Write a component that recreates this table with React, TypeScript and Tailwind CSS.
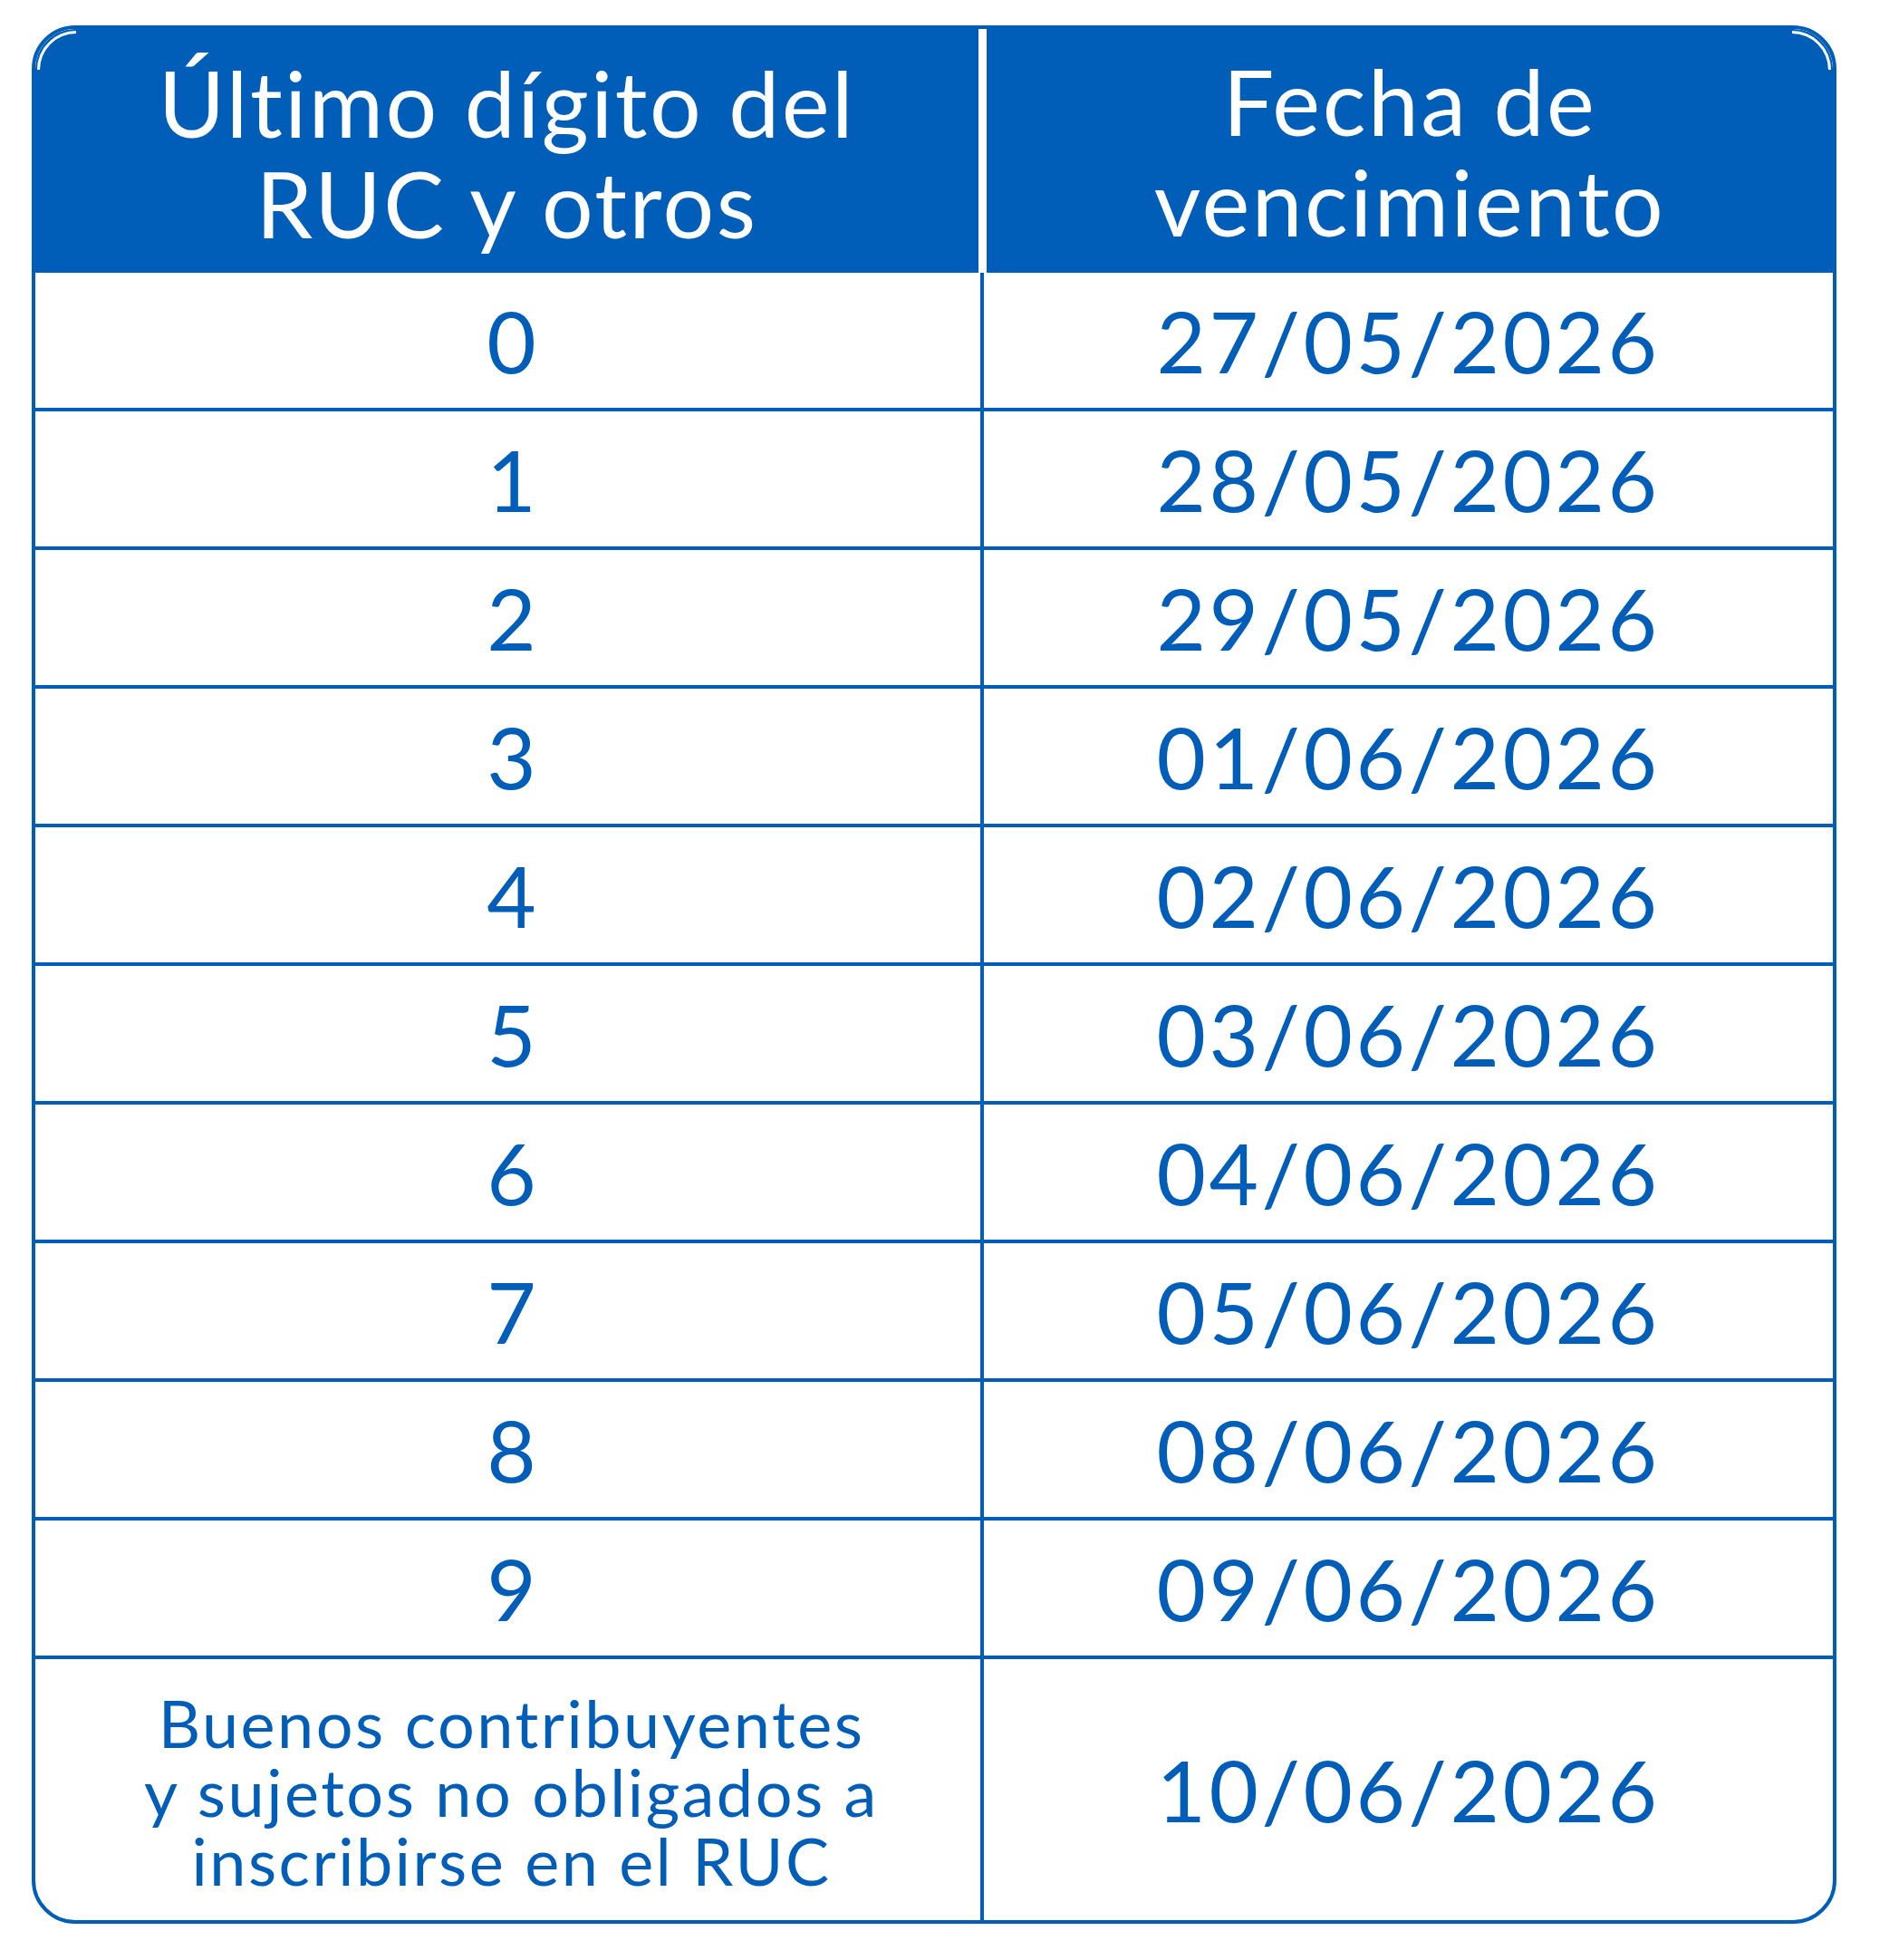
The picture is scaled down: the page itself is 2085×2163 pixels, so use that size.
import React from 'react';

const rows: { digit: string; date: string }[] = [
  { digit: '0', date: '27/05/2026' },
  { digit: '1', date: '28/05/2026' },
  { digit: '2', date: '29/05/2026' },
  { digit: '3', date: '01/06/2026' },
  { digit: '4', date: '02/06/2026' },
  { digit: '5', date: '03/06/2026' },
  { digit: '6', date: '04/06/2026' },
  { digit: '7', date: '05/06/2026' },
  { digit: '8', date: '08/06/2026' },
  { digit: '9', date: '09/06/2026' },
];

const footLines = ['Buenos contribuyentes', 'y sujetos no obligados a', 'inscribirse en el RUC'];

export default function App() {
  return (
    <div className="w-[2085px] min-h-[2163px] bg-white pt-[28px] pl-[35px] font-['Lato','Liberation_Sans',sans-serif]">
      <div className="relative w-[1992px] rounded-[48px] border-4 border-[#005eb8] overflow-hidden">
        {/* corner highlights */}
        <div className="absolute top-[2px] left-[2px] w-[86px] h-[86px] rounded-full border-[3px] border-t-white border-l-transparent border-r-transparent border-b-transparent -rotate-45" />
        <div className="absolute top-[2px] right-[2px] w-[86px] h-[86px] rounded-full border-[3px] border-t-white border-l-transparent border-r-transparent border-b-transparent rotate-45" />

        {/* Header */}
        <div className="grid grid-cols-[1041px_1fr] gap-x-[9px] bg-white h-[269px]">
          <div className="bg-[#005eb8] flex items-center justify-center pt-[4px]">
            <p className="text-white text-[100px] leading-[111px] text-center tracking-[2.5px]">
              Último dígito del
              <br />
              RUC y otros
            </p>
          </div>
          <div className="bg-[#005eb8] flex items-center justify-center">
            <p className="text-white text-[100px] leading-[111px] text-center tracking-[2.5px]">
              Fecha de
              <br />
              vencimiento
            </p>
          </div>
        </div>

        {/* Rows */}
        {rows.map(row => (
          <div
            key={row.digit}
            className="grid grid-cols-[1047px_1fr] h-[153px] border-b-4 border-[#005eb8] text-[#005eb8]"
          >
            <div className="border-r-4 border-[#005eb8] flex items-center justify-center pl-[8px] text-[94px] leading-none">
              {row.digit}
            </div>
            <div className="flex items-center justify-center text-[94px] leading-none tracking-[3.5px]">
              {row.date}
            </div>
          </div>
        ))}

        {/* Last row */}
        <div className="grid grid-cols-[1047px_1fr] h-[288px] text-[#005eb8]">
          <div className="border-r-4 border-[#005eb8] flex flex-col items-center justify-center pt-[4px] pl-[8px]">
            {footLines.map(line => (
              <div key={line} className="h-[76px] flex items-center text-[72px] leading-[76px] tracking-[2.5px] whitespace-nowrap">
                {line}
              </div>
            ))}
          </div>
          <div className="flex items-center justify-center text-[94px] leading-none tracking-[3.5px]">
            10/06/2026
          </div>
        </div>
      </div>
    </div>
  );
}
